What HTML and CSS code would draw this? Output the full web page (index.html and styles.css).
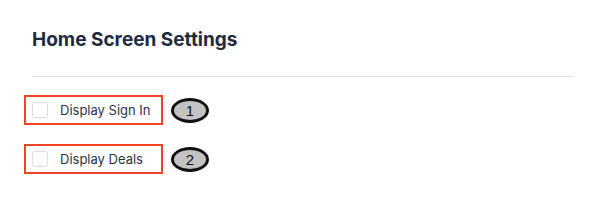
FILE: index.html
```html
<!DOCTYPE html>
<html>

<head>
    <meta charset="UTF-8">
    <meta name="viewport" content="width=device-width, initial-scale=1.0">
    <title>Home Screen Settings</title>
    <link rel="stylesheet" href="styles.css">
</head>

<body>

    <div class="panel">
        <div class="panel-header">
            <h2>Home Screen Settings</h2>
        </div>

        <div class="options">
            <div class="option-row">
                <label class="option">
                    <input type="checkbox" id="displaySignIn">
                    <span>Display Sign In</span>
                </label>
                <span class="marker">1</span>
            </div>

            <div class="option-row">
                <label class="option">
                    <input type="checkbox" id="displayDeals">
                    <span>Display Deals</span>
                </label>
                <span class="marker">2</span>
            </div>
        </div>
    </div>

</body>

</html>
```

FILE: styles.css
```css
body {
    margin: 0;
    background-color: #fff;
    font-family: Inter, "Noto Sans", sans-serif;
}

.panel {
    padding: 24px 24px 0 32px;
}

.panel-header {
    padding-bottom: 20px;
    border-bottom: 1px solid #d9dee8;
}

h2 {
    margin: 0;
    font-size: 19px;
    line-height: 32px;
    font-weight: 700;
    color: #1f2a3d;
}

.options {
    display: flex;
    flex-direction: column;
    gap: 19px;
    margin-top: 18px;
    margin-left: -8px;
}

.option-row {
    display: flex;
    align-items: center;
}

.option {
    display: flex;
    align-items: center;
    gap: 12px;
    box-sizing: border-box;
    width: 139px;
    height: 30px;
    padding: 0 6px;
    border: 2px solid #ef4423;
    font-size: 13px;
    color: #2b3445;
}

.option input[type="checkbox"] {
    appearance: none;
    margin: 0;
    width: 16px;
    height: 16px;
    border: 1px solid #d6dbea;
    border-radius: 3px;
    background-color: #fff;
}

.marker {
    display: flex;
    align-items: center;
    justify-content: center;
    width: 32px;
    height: 19px;
    margin-left: 8px;
    border: 3px solid #111;
    border-radius: 50%;
    background-color: #c3c3c3;
    font-family: "Liberation Sans", Arial, sans-serif;
    font-size: 15px;
    color: #111;
}
```
